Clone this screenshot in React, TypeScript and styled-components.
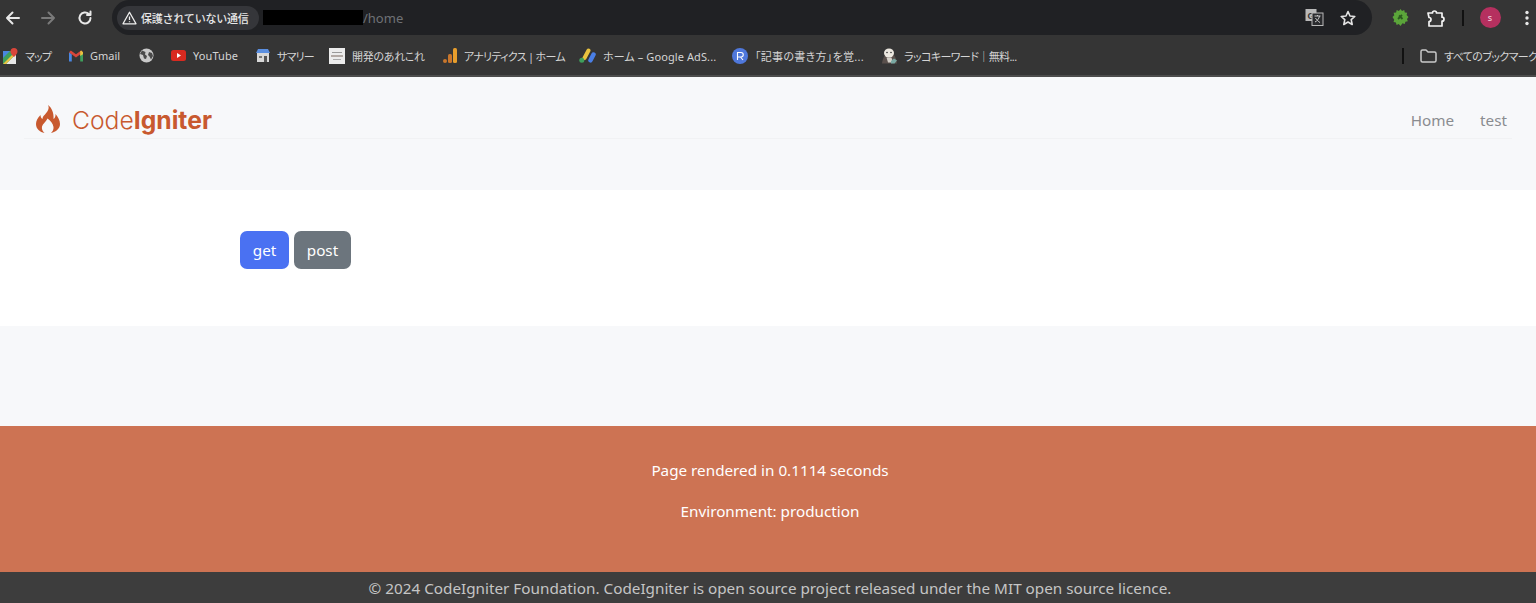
import React from "react";
import styled, { createGlobalStyle } from "styled-components";

const GlobalStyle = createGlobalStyle`
  html, body { margin: 0; padding: 0; background: #f7f8fa; }
  body { font-family: "Noto Sans", "Noto Sans CJK JP", sans-serif; overflow: hidden; }
  * { box-sizing: border-box; }
`;

const Page = styled.div`
  width: 1536px;
  height: 603px;
  display: flex;
  flex-direction: column;
  overflow: hidden;
`;

/* browser chrome */
const Chrome = styled.div`
  height: 77px;
  flex: none;
  background: #353535;
  border-bottom: 2px solid #4c4c4c;
  display: flex;
  flex-direction: column;
`;

const Toolbar = styled.div`
  height: 38px;
  flex: none;
  display: flex;
  align-items: flex-start;
  padding-left: 3px;
`;

const NavIcon = styled.div<{ $w: number }>`
  width: ${(p) => p.$w}px;
  height: 35px;
  flex: none;
  display: flex;
  align-items: center;
  justify-content: center;
`;

const Omnibox = styled.div`
  width: 1260px;
  height: 35px;
  margin-left: 16px;
  background: #202124;
  border-radius: 18px;
  display: flex;
  align-items: center;
  padding: 0 16px 0 5px;
  flex: none;
`;

const SecurityChip = styled.div`
  height: 24px;
  width: 142px;
  background: #35363a;
  border-radius: 12px;
  display: flex;
  align-items: center;
  gap: 4px;
  padding-left: 5px;
  color: #e8e8e8;
  font-size: 11px;
  font-weight: 500;
  letter-spacing: -0.2px;
  white-space: nowrap;
  flex: none;
`;

const Redacted = styled.div`
  width: 100px;
  height: 15px;
  margin-left: 4px;
  background: #000;
  flex: none;
`;

const UrlPath = styled.span`
  color: #6f7276;
  font-size: 13px;
`;

const OmniRight = styled.div`
  margin-left: auto;
  display: flex;
  align-items: center;
  gap: 16px;
`;

const ToolbarRight = styled.div`
  flex: 1;
  display: flex;
  align-items: center;
  height: 35px;
  padding-left: 20px;
`;

const Divider = styled.div<{ $h: number }>`
  width: 2px;
  height: ${(p) => p.$h}px;
  background: #111;
  flex: none;
`;

const Avatar = styled.div`
  width: 21px;
  height: 21px;
  border-radius: 50%;
  background: #b5305f;
  color: #f3d9e2;
  font-size: 9px;
  display: flex;
  align-items: center;
  justify-content: center;
  flex: none;
`;

const BookmarkBar = styled.div`
  flex: 1;
  display: flex;
  align-items: center;
  padding: 0 0 2px 3px;
  color: #d4d4d4;
  font-size: 11px;
  font-feature-settings: "palt";
  white-space: nowrap;
`;

const Bookmark = styled.div<{ $w: number; $ls: number }>`
  width: ${(p) => p.$w}px;
  flex: none;
  display: flex;
  align-items: center;
  gap: 7px;
  letter-spacing: ${(p) => p.$ls}px;
`;

const BookmarkEnd = styled.div`
  margin-left: auto;
  display: flex;
  align-items: center;
  gap: 16px;
  width: 134px;
  flex: none;
`;

const AllMarks = styled.div`
  display: flex;
  align-items: center;
  gap: 7px;
  letter-spacing: -0.6px;
`;

/* site */
const HeaderBand = styled.header`
  height: 113px;
  flex: none;
  background: #f7f8fa;
  padding: 0 24px;
`;

const NavBar = styled.nav`
  height: 62px;
  border-bottom: 1px solid #f1f2f4;
  display: flex;
  align-items: center;
  justify-content: space-between;
  padding: 23px 5px 0 12px;
`;

const Brand = styled.div`
  display: flex;
  align-items: center;
  gap: 12px;
`;

const BrandName = styled.div`
  color: #c8592f;
  font-family: Inter, sans-serif;
  font-size: 24.7px;
  font-weight: 300;
  line-height: 1;
  padding-top: 2px;
  b { font-weight: 700; }
`;

const NavLinks = styled.div`
  display: flex;
  gap: 26px;
  padding-top: 2px;
`;

const NavLink = styled.a`
  color: #8a8c90;
  font-size: 15.25px;
`;

const Content = styled.main`
  height: 136px;
  flex: none;
  background: #fff;
  padding: 41px 0 0 240px;
  display: flex;
  gap: 5px;
  align-items: flex-start;
`;

const Btn = styled.button<{ $bg: string }>`
  height: 38px;
  padding: 0 12.75px;
  border: 0;
  border-radius: 7px;
  background: ${(p) => p.$bg};
  color: #fff;
  font-family: inherit;
  font-size: 15.25px;
`;

const Spacer = styled.div`
  height: 100px;
  flex: none;
`;

const RenderInfo = styled.div`
  height: 146px;
  flex: none;
  background: #cd7353;
  color: #fff;
  font-size: 15.25px;
  padding: 34px 0 0 4px;
  display: flex;
  flex-direction: column;
  gap: 21px;
  align-items: center;
`;

const InfoLine = styled.div`
  line-height: 20px;
`;

const Copyright = styled.div`
  flex: 1;
  background: #3d3d3d;
  color: #c5c5c5;
  font-size: 15.27px;
  display: flex;
  align-items: center;
  justify-content: center;
  padding-left: 4px;
`;

const Line = ({ d, c = "#e8e8e8", w = 2 }: { d: string; c?: string; w?: number }) => (
  <svg width="16" height="16" viewBox="0 0 16 16" fill="none" stroke={c} strokeWidth={w} strokeLinecap="round" strokeLinejoin="round">
    <path d={d} />
  </svg>
);

const Flame = () => (
  <svg width="24" height="28" viewBox="0 0 24 28">
    <path
      fill="#c8592f"
      d="M12 0C14 4 11 7 9 9.500 7.500 11 6.500 12 6.500 14 5 13 4.500 11.500 4.500 10 1.500 13 0 16 0 19c0 5 4 8 8.500 9-2-2-3-4-2.500-6.500C6.800 18.500 10 17 11.500 13.500c3 2 5.500 5 6 8.500.300 2.500-1 4.500-2.500 6 5-1 9-4.500 9-9 0-4-2-7-4.500-10 .200 2.500-.500 4-2 5C18 8 16 3 12 0z"
    />
  </svg>
);

const MapsIcon = () => (
  <svg width="15" height="16" viewBox="0 0 15 16">
    <rect y="3" width="13" height="13" fill="#3f9f5c" />
    <path d="M3 16 13 6v10z" fill="#e8e8e8" />
    <path d="M0 3h7L0 10z" fill="#4a86e0" />
    <path d="M0 16 13 3v3L3 16z" fill="#e9c33f" />
    <path d="M11 0a3.500 3.500 0 0 1 3.500 3.500C14.500 6 11 9 11 9S7.500 6 7.500 3.500A3.500 3.500 0 0 1 11 0z" fill="#d9463a" />
  </svg>
);

const GmailIcon = () => (
  <svg width="14" height="12" viewBox="0 0 15 12">
    <path d="M0 2v10h3V4z" fill="#4a86e0" />
    <path d="M15 2v10h-3V4z" fill="#3f9f5c" />
    <path d="M0 2l7.500 5.500L15 2 13 0 7.500 4 2 0z" fill="#d9463a" />
    <path d="M13 0l2 2v2l-3 2V1z" fill="#e9c33f" />
  </svg>
);

const GlobeIcon = () => (
  <svg width="15" height="15" viewBox="0 0 15 15">
    <circle cx="7.500" cy="7.500" r="7" fill="#c9c9c9" />
    <path d="M3 2.500 6.500 4 6 6.500 8 8l-1 3-2-.5L4 7 1 6zM10 4l3 1 1 3-2 3.500-1.500-3L9 7z" fill="#4a4a4a" />
  </svg>
);

const YouTubeIcon = () => (
  <svg width="15" height="11" viewBox="0 0 15 11">
    <rect width="15" height="11" rx="2.500" fill="#d92a20" />
    <path d="M6 3v5l4-2.500z" fill="#fff" />
  </svg>
);

const SummaryIcon = () => (
  <svg width="14" height="13" viewBox="0 0 14 13">
    <path d="M2 0h10l2 4H0z" fill="#5b8fe0" />
    <path d="M1 4h12v9H1z" fill="#d8d8d8" />
    <path d="M8 7h3v6H8z" fill="#555" />
    <path d="M3 7h3v2H3z" fill="#777" />
  </svg>
);

const NotesIcon = () => (
  <svg width="16" height="16" viewBox="0 0 16 16">
    <rect width="16" height="16" fill="#ececec" />
    <rect x="3" y="4" width="10" height="1" fill="#999" />
    <rect x="2" y="7" width="12" height="2" fill="#b3aaa5" />
    <rect x="4" y="11" width="8" height="1" fill="#aaa" />
  </svg>
);

const AnalyticsIcon = () => (
  <svg width="14" height="15" viewBox="0 0 14 15">
    <rect x="10" y="0" width="4" height="15" rx="1.500" fill="#e89e2c" />
    <rect x="5" y="6" width="4" height="9" rx="1.500" fill="#c9762c" />
    <circle cx="2" cy="13" r="2" fill="#c9762c" />
  </svg>
);

const AdsIcon = () => (
  <svg width="17" height="15" viewBox="0 0 17 15" fill="none" strokeLinecap="round">
    <path d="M9.500 2.500 5.500 10" stroke="#e9c33f" strokeWidth="4" />
    <circle cx="2.800" cy="12.200" r="2.500" fill="#3f9f5c" />
    <path d="M14.500 6.500 11.500 12.300" stroke="#4a7fe6" strokeWidth="4.500" />
  </svg>
);

const RIcon = () => (
  <svg width="16" height="16" viewBox="0 0 16 16">
    <circle cx="8" cy="8" r="8" fill="#4f78dc" />
    <path d="M5.500 12V4.500H9a2 2 0 0 1 0 4.500H5.500M8.500 9l2.500 3" fill="none" stroke="#fff" strokeWidth="1.100" />
  </svg>
);

const RakkoIcon = () => (
  <svg width="15" height="16" viewBox="0 0 15 16">
    <path d="M0 15.500C.500 11 2 8 3.500 6.500h8c2 2 3 5 3.500 9z" fill="#5a504c" />
    <ellipse cx="7" cy="5" rx="5" ry="4.500" fill="#ece8e0" />
    <circle cx="5" cy="4.500" r=".8" fill="#333" />
    <circle cx="9" cy="4.500" r=".8" fill="#333" />
    <path d="M4.500 9.500h5l1.500 5H6z" fill="#d6d2ca" />
    <path d="M9 13l3-2.500 3 2-2.500 3H9z" fill="#7aa9a3" />
  </svg>
);

const TranslateIcon = () => (
  <svg width="19" height="19" viewBox="0 0 19 19">
    <rect x="0.500" y="1" width="11" height="12" fill="#b9b9b9" />
    <text x="2.500" y="10.500" fontSize="9" fontWeight="700" fill="#333" fontFamily="Liberation Sans, sans-serif">G</text>
    <rect x="7" y="5" width="11" height="12.500" fill="#2a2b2e" stroke="#b9b9b9" />
    <path d="M9.500 8h6M12.500 7v1M14.500 8c-.500 3-2.500 5-4.500 6M10.500 10c1 2 3 3.500 4.500 4.500" fill="none" stroke="#c9c9c9" />
  </svg>
);

const StarIcon = () => (
  <svg width="16" height="16" viewBox="0 0 16 16" fill="none" stroke="#e3e3e3" strokeWidth="1.600" strokeLinejoin="round">
    <path d="M8 1.500 10 6l4.800.5-3.600 3.200 1 4.800L8 12l-4.200 2.500 1-4.800L1.200 6.500 6 6z" />
  </svg>
);

const BugIcon = () => (
  <svg width="17" height="17" viewBox="0 0 17 17">
    <path d="M8.500 0l1.500 2 2.200-1 .6 2.400 2.400.3-.6 2.400L16.500 8l-1.500 2 .800 2.200-2.400.500-.700 2.400-2.200-.800L8.500 17l-1.700-1.900-2.200.900-.700-2.400-2.400-.500.700-2.300L.500 8l1.800-1.700-.700-2.500 2.500-.300.600-2.400 2.200 1z" fill="#5ba53a" />
    <path d="M6 10l4-4M7 6.500l3.500 3.500" stroke="#2c5a20" strokeWidth="1.800" />
  </svg>
);

const PuzzleIcon = () => (
  <svg width="19" height="18" viewBox="0 0 19 18" fill="none" stroke="#f2f2f2" strokeWidth="1.700" strokeLinejoin="round">
    <path d="M2 4h4.500a2 2 0 0 1 4 0H16v4.200a2 2 0 0 1 0 4V17H3v-4.500a2 2 0 0 0 0-4z" />
  </svg>
);

const DotsIcon = () => (
  <svg width="4" height="16" viewBox="0 0 4 16" fill="#e8e8e8">
    <circle cx="2" cy="2.500" r="1.700" />
    <circle cx="2" cy="8" r="1.700" />
    <circle cx="2" cy="13.500" r="1.700" />
  </svg>
);

const FolderIcon = () => (
  <svg width="17" height="14" viewBox="0 0 17 14" fill="none" stroke="#c9c9c9" strokeWidth="1.500" strokeLinejoin="round">
    <path d="M1 2.500A1.500 1.500 0 0 1 2.500 1H6l2 2h6.500A1.500 1.500 0 0 1 16 4.500v7a1.500 1.500 0 0 1-1.500 1.500h-12A1.500 1.500 0 0 1 1 11.500z" />
  </svg>
);

const WarnIcon = () => (
  <svg width="15" height="14" viewBox="0 0 15 14" fill="none" stroke="#f0f0f0" strokeWidth="1.300" strokeLinejoin="round">
    <path d="M7.500 1.200 14 12.800H1z" />
    <path d="M7.500 5.500v3.500M7.500 10.200v1" />
  </svg>
);

const bookmarks = [
  { w: 66, ls: -0.8, icon: <MapsIcon />, label: "マップ" },
  { w: 70, ls: 0, icon: <GmailIcon />, label: "Gmail" },
  { w: 32, ls: 0, icon: <GlobeIcon />, label: "" },
  { w: 85, ls: 0.1, icon: <YouTubeIcon />, label: "YouTube" },
  { w: 73, ls: -0.8, icon: <SummaryIcon />, label: "サマリー" },
  { w: 114, ls: -0.3, icon: <NotesIcon />, label: "開発のあれこれ" },
  { w: 136, ls: -0.7, icon: <AnalyticsIcon />, label: "アナリティクス | ホーム" },
  { w: 153, ls: 0.1, icon: <AdsIcon />, label: "ホーム – Google AdS..." },
  { w: 150, ls: 0.3, icon: <RIcon />, label: "「記事の書き方」を覚..." },
  { w: 150, ls: -0.6, icon: <RakkoIcon />, label: "ラッコキーワード｜無料..." },
];

export default function App() {
  return (
    <Page>
      <GlobalStyle />
      <Chrome>
        <Toolbar>
          <NavIcon $w={19}>
            <Line d="M14 8H2M7.500 2.500 2 8l5.500 5.500" />
          </NavIcon>
          <NavIcon $w={52}>
            <Line d="M2 8h12M8.500 2.500 14 8l-5.500 5.500" c="#7a7a7a" />
          </NavIcon>
          <NavIcon $w={22}>
            <Line d="M13.500 8a5.500 5.500 0 1 1-1.700-4M13.500 1.500v3.500H10" />
          </NavIcon>
          <Omnibox>
            <SecurityChip>
              <WarnIcon />
              保護されていない通信
            </SecurityChip>
            <Redacted />
            <UrlPath>/home</UrlPath>
            <OmniRight>
              <TranslateIcon />
              <StarIcon />
            </OmniRight>
          </Omnibox>
          <ToolbarRight>
            <BugIcon />
            <NavIcon $w={53}>
              <PuzzleIcon />
            </NavIcon>
            <Divider $h={16} />
            <NavIcon $w={52}>
              <Avatar>s</Avatar>
            </NavIcon>
            <NavIcon $w={22}>
              <DotsIcon />
            </NavIcon>
          </ToolbarRight>
        </Toolbar>
        <BookmarkBar>
          {bookmarks.map((b) => (
            <Bookmark key={b.w + b.label} $w={b.w} $ls={b.ls}>
              {b.icon}
              {b.label}
            </Bookmark>
          ))}
          <BookmarkEnd>
            <Divider $h={16} />
            <AllMarks>
              <FolderIcon />
              すべてのブックマーク
            </AllMarks>
          </BookmarkEnd>
        </BookmarkBar>
      </Chrome>

      <HeaderBand>
        <NavBar>
          <Brand>
            <Flame />
            <BrandName>
              Code<b>Igniter</b>
            </BrandName>
          </Brand>
          <NavLinks>
            <NavLink>Home</NavLink>
            <NavLink>test</NavLink>
          </NavLinks>
        </NavBar>
      </HeaderBand>

      <Content>
        <Btn $bg="#4a71f2">get</Btn>
        <Btn $bg="#6c757d">post</Btn>
      </Content>

      <Spacer />

      <RenderInfo>
        <InfoLine>Page rendered in 0.1114 seconds</InfoLine>
        <InfoLine>Environment: production</InfoLine>
      </RenderInfo>

      <Copyright>© 2024 CodeIgniter Foundation. CodeIgniter is open source project released under the MIT open source licence.</Copyright>
    </Page>
  );
}
